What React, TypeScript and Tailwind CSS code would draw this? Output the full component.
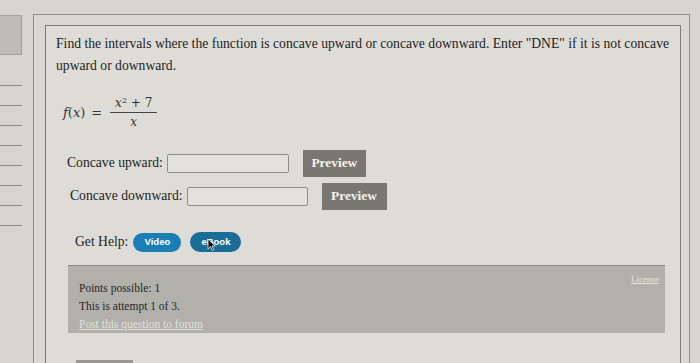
import React from 'react';

function Cursor() {
  return (
    <svg width="9" height="13" viewBox="0 0 9 13" className="absolute left-[17px] top-[6px]">
      <path d="M1 1 L1 11 L3.5 8.6 L5.3 12.4 L6.8 11.7 L5 8 L8.2 8 Z" fill="#111" stroke="#eee" strokeWidth="0.8" />
    </svg>
  );
}

export default function App() {
  const lines = [0, 1, 2, 3, 4, 5, 6, 7];
  return (
    <div className="w-[700px] h-[363px] overflow-hidden bg-[#d6d4cf] flex font-['Liberation_Serif',serif] text-[#232323]">
      {/* left nav strip */}
      <div className="w-[22px] shrink-0 pt-[15px]">
        <div className="h-[40px] bg-[#bebcb7] border-y border-r border-[#a3a19c]" />
        <div className="mt-[30px]">
          {lines.map((i) => (
            <div key={i} className="h-[20px] border-t border-[#8e8c88]" />
          ))}
        </div>
      </div>

      {/* outer frame */}
      <div className="ml-[11px] mr-[10px] mt-[14px] flex-1 border-l border-t border-r border-[#8f8d89] bg-[#d9d7d2] pl-[11px] pr-[8px] pt-[10px]">
        {/* question card */}
        <div className="h-[340px] border-l border-t border-r border-[#7d7b77] bg-[#dedcd7] pl-[10px] pr-[6px] pt-[7px]">
          <p className="text-[13.65px] leading-[22px] max-w-[624px]">
            Find the intervals where the function is concave upward or concave downward. Enter "DNE" if it is not concave upward or downward.
          </p>

          {/* formula */}
          <div className="mt-[17px] ml-[7px] flex items-center gap-[6px] font-['DejaVu_Serif',serif] text-[#333]">
            <span className="text-[13px] italic">
              f<span className="not-italic">(</span>x<span className="not-italic">)</span>
            </span>
            <span className="text-[13px]">=</span>
            <span className="flex flex-col items-center ml-[2px]">
              <span className="text-[12px] leading-[18px] px-[2px]">
                <span className="italic">x</span>
                <sup className="text-[8px]">2</sup> + 7
              </span>
              <span className="w-[47px] border-t border-[#444]" />
              <span className="text-[12px] leading-[18px] italic">x</span>
            </span>
          </div>

          {/* concave upward */}
          <div className="mt-[19px] ml-[11px] flex items-center h-[27px]">
            <span className="text-[13.65px]">Concave upward:</span>
            <span className="ml-[4px] w-[122px] h-[19px] bg-[#e3e1dc] border border-[#8f8d89] rounded-[2px]" />
            <button className="ml-[14px] w-[63px] h-[27px] bg-[#7a7772] text-[#f4f2ee] text-[13.4px] font-bold">
              Preview
            </button>
          </div>

          {/* concave downward */}
          <div className="mt-[6px] ml-[14px] flex items-center h-[27px]">
            <span className="text-[13.65px]">Concave downward:</span>
            <span className="ml-[4px] w-[121px] h-[19px] bg-[#e3e1dc] border border-[#8f8d89] rounded-[2px]" />
            <button className="ml-[14px] w-[65px] h-[27px] bg-[#7a7772] text-[#f4f2ee] text-[13.4px] font-bold">
              Preview
            </button>
          </div>

          {/* get help */}
          <div className="mt-[22px] ml-[19px] flex items-center">
            <span className="text-[13.65px]">Get Help:</span>
            <span className="ml-[5px] w-[48px] h-[19px] rounded-full bg-[#1b7fb6] text-white text-[9.5px] font-bold font-['Liberation_Sans',sans-serif] flex items-center justify-center">
              Video
            </span>
            <span className="relative ml-[9px] w-[51px] h-[20px] rounded-full bg-[#1a6d97] text-white text-[9.5px] font-bold font-['Liberation_Sans',sans-serif] flex items-center justify-center">
              eBook
              <Cursor />
            </span>
          </div>

          {/* footer */}
          <div className="mt-[13px] ml-[12px] mr-[9px] h-[68px] bg-[#b2b0ab] border-t border-[#8d8b87] pl-[11px] pr-[6px] pt-[7px] flex justify-between">
            <div className="text-[11.5px] leading-[18px] text-[#262626] pt-[6px]">
              <div>Points possible: 1</div>
              <div>This is attempt 1 of 3.</div>
              <div className="text-[#e2e0dc] underline">Post this question to forum</div>
            </div>
            <div className="text-[9px] text-[#e6e4e0] underline">License</div>
          </div>

          <div className="mt-[27px] ml-[20px] w-[57px] h-[6px] bg-[#9b9994]" />
        </div>
      </div>
    </div>
  );
}
